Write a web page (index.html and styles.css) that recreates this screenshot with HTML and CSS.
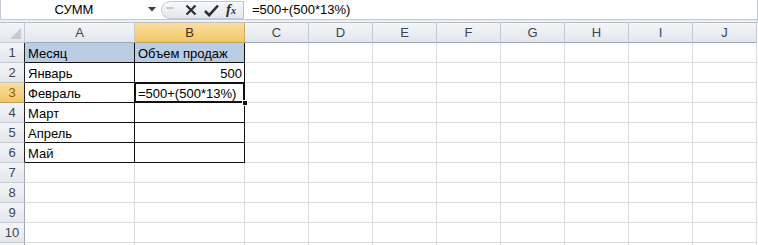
FILE: index.html
```html
<!DOCTYPE html>
<html lang="ru">
<head>
    <meta charset="UTF-8">
    <title>СУММ</title>
    <link rel="stylesheet" href="styles.css">
</head>
<body>
    <div class="formula-bar">
        <div class="name-box">СУММ</div>
        <div class="name-arrow">
            <svg width="8" height="5" viewBox="0 0 8 5"><path d="M0 0H8L4 4.5Z" fill="#3c3c3c"/></svg>
        </div>
        <div class="fx-buttons">
            <svg class="grip" width="8" height="6" viewBox="0 0 8 6"><path d="M1 3H7" stroke="#c4cad2" stroke-width="2" stroke-linecap="round"/></svg>
            <svg class="btn" width="12" height="12" viewBox="0 0 12 12"><path d="M1.5 1.5L10.5 10.5M10.5 1.5L1.5 10.5" stroke="#2e2e2e" stroke-width="2.2"/></svg>
            <svg class="btn" width="15" height="13" viewBox="0 0 15 13"><path d="M1 7L5.2 11.2L14 1.5" fill="none" stroke="#2e2e2e" stroke-width="2.6"/></svg>
            <span class="fx">f<small>x</small></span>
        </div>
        <div class="formula">=500+(500*13%)</div>
    </div>
    <div class="bar-gap"></div>

    <div class="sheet">
        <div class="hd corner"><span class="tri"></span></div>
        <div class="hd col">A</div>
        <div class="hd col sel">B</div>
        <div class="hd col">C</div>
        <div class="hd col">D</div>
        <div class="hd col">E</div>
        <div class="hd col">F</div>
        <div class="hd col">G</div>
        <div class="hd col">H</div>
        <div class="hd col">I</div>
        <div class="hd col">J</div>

        <div class="hd row dark">1</div>
        <div class="c t head">Месяц</div>
        <div class="c t head">Объем продаж</div>
        <div class="c"></div><div class="c"></div><div class="c"></div><div class="c"></div><div class="c"></div><div class="c"></div><div class="c"></div><div class="c"></div>

        <div class="hd row dark">2</div>
        <div class="c t">Январь</div>
        <div class="c t num">500</div>
        <div class="c"></div><div class="c"></div><div class="c"></div><div class="c"></div><div class="c"></div><div class="c"></div><div class="c"></div><div class="c"></div>

        <div class="hd row dark sel">3</div>
        <div class="c t">Февраль</div>
        <div class="c t active">=500+(500*13%)<span class="handle"></span></div>
        <div class="c"></div><div class="c"></div><div class="c"></div><div class="c"></div><div class="c"></div><div class="c"></div><div class="c"></div><div class="c"></div>

        <div class="hd row dark">4</div>
        <div class="c t">Март</div>
        <div class="c t"></div>
        <div class="c"></div><div class="c"></div><div class="c"></div><div class="c"></div><div class="c"></div><div class="c"></div><div class="c"></div><div class="c"></div>

        <div class="hd row dark">5</div>
        <div class="c t">Апрель</div>
        <div class="c t"></div>
        <div class="c"></div><div class="c"></div><div class="c"></div><div class="c"></div><div class="c"></div><div class="c"></div><div class="c"></div><div class="c"></div>

        <div class="hd row dark">6</div>
        <div class="c t">Май</div>
        <div class="c t"></div>
        <div class="c"></div><div class="c"></div><div class="c"></div><div class="c"></div><div class="c"></div><div class="c"></div><div class="c"></div><div class="c"></div>

        <div class="hd row">7</div>
        <div class="c"></div><div class="c"></div><div class="c"></div><div class="c"></div><div class="c"></div><div class="c"></div><div class="c"></div><div class="c"></div><div class="c"></div><div class="c"></div>

        <div class="hd row">8</div>
        <div class="c"></div><div class="c"></div><div class="c"></div><div class="c"></div><div class="c"></div><div class="c"></div><div class="c"></div><div class="c"></div><div class="c"></div><div class="c"></div>

        <div class="hd row">9</div>
        <div class="c"></div><div class="c"></div><div class="c"></div><div class="c"></div><div class="c"></div><div class="c"></div><div class="c"></div><div class="c"></div><div class="c"></div><div class="c"></div>

        <div class="hd row">10</div>
        <div class="c"></div><div class="c"></div><div class="c"></div><div class="c"></div><div class="c"></div><div class="c"></div><div class="c"></div><div class="c"></div><div class="c"></div><div class="c"></div>

        <div class="hd row"></div>
        <div class="c"></div><div class="c"></div><div class="c"></div><div class="c"></div><div class="c"></div><div class="c"></div><div class="c"></div><div class="c"></div><div class="c"></div><div class="c"></div>
    </div>
</body>
</html>
```

FILE: styles.css
```css
* {
    box-sizing: border-box;
}
body {
    margin: 0;
    width: 758px;
    height: 245px;
    overflow: hidden;
    background-color: #fff;
    font-family: "Liberation Sans", Arial, sans-serif;
    font-size: 13px;
    color: #000;
}
.formula-bar {
    display: flex;
    height: 20px;
    border-left: 1px solid #c6ccd4;
    border-right: 1px solid #c6ccd4;
    border-bottom: 1px solid #c3c9d1;
    background-color: #fff;
}
.name-box {
    width: 144px;
    text-align: center;
    line-height: 19px;
    padding-left: 2px;
}
.name-arrow {
    width: 16px;
    display: flex;
    align-items: center;
    padding-left: 3px;
}
.fx-buttons {
    display: flex;
    align-items: center;
    width: 83px;
    height: 18px;
    margin-top: 1px;
    border: 1px solid #c2c9d2;
    border-right-color: #b4bcc7;
    border-radius: 9px 0 0 9px;
    background: linear-gradient(#f7f8fa, #e3e8ee);
    padding-left: 4px;
}
.grip {
    margin-right: 11px;
    margin-top: -4px;
}
.btn {
    margin-right: 7px;
}
.fx {
    font-family: "Liberation Serif", serif;
    font-style: italic;
    font-weight: bold;
    font-size: 15px;
    color: #2e2e2e;
    line-height: 16px;
}
.fx small {
    font-size: 10px;
}
.formula {
    flex: 1;
    padding-left: 8px;
    line-height: 19px;
}
.bar-gap {
    height: 3px;
    background-color: #edf0f4;
    border-bottom: 1px solid #b9c0ca;
    border-right: 1px solid #c6ccd4;
}

.sheet {
    display: grid;
    grid-template-columns: 25px 110px 110px repeat(8, 64px);
    grid-auto-rows: 20px;
}
.hd {
    background: linear-gradient(#f3f5f8, #e3e7ed);
    color: #3d4452;
    border-right: 1px solid #c5cad2;
    border-bottom: 1px solid #c5cad2;
    text-align: center;
    line-height: 19px;
}
.hd.col {
    border-bottom-color: #9ea7b4;
}
.hd.row {
    border-right-color: #9ea7b4;
}
.hd.row.dark {
    border-right-color: #222;
}
.hd.sel {
    background: linear-gradient(#f9dea0, #f1c766);
    color: #3a3020;
    border-right-color: #d4a84c;
    border-bottom-color: #c9a04a;
}
.hd.row.sel {
    color: #8a5a10;
    border-right-color: #222;
}
.corner {
    position: relative;
}
.tri {
    position: absolute;
    right: 3px;
    bottom: 3px;
    width: 0;
    height: 0;
    border-left: 11px solid transparent;
    border-bottom: 11px solid #c5cad1;
}
.c {
    border-right: 1px solid #dadcdf;
    border-bottom: 1px solid #dadcdf;
    padding: 1px 2px 0 3px;
    line-height: 19px;
    white-space: nowrap;
}
.c.t {
    border-right-color: #111;
    border-bottom-color: #111;
}
.c.head {
    background-color: #b9cde5;
}
.c.num {
    text-align: right;
}
.active {
    position: relative;
    box-shadow: inset 0 0 0 1px #111;
    padding-left: 3px;
}
.handle {
    position: absolute;
    right: -4px;
    bottom: -4px;
    width: 6px;
    height: 6px;
    background-color: #111;
    border: 1px solid #fff;
}
```
